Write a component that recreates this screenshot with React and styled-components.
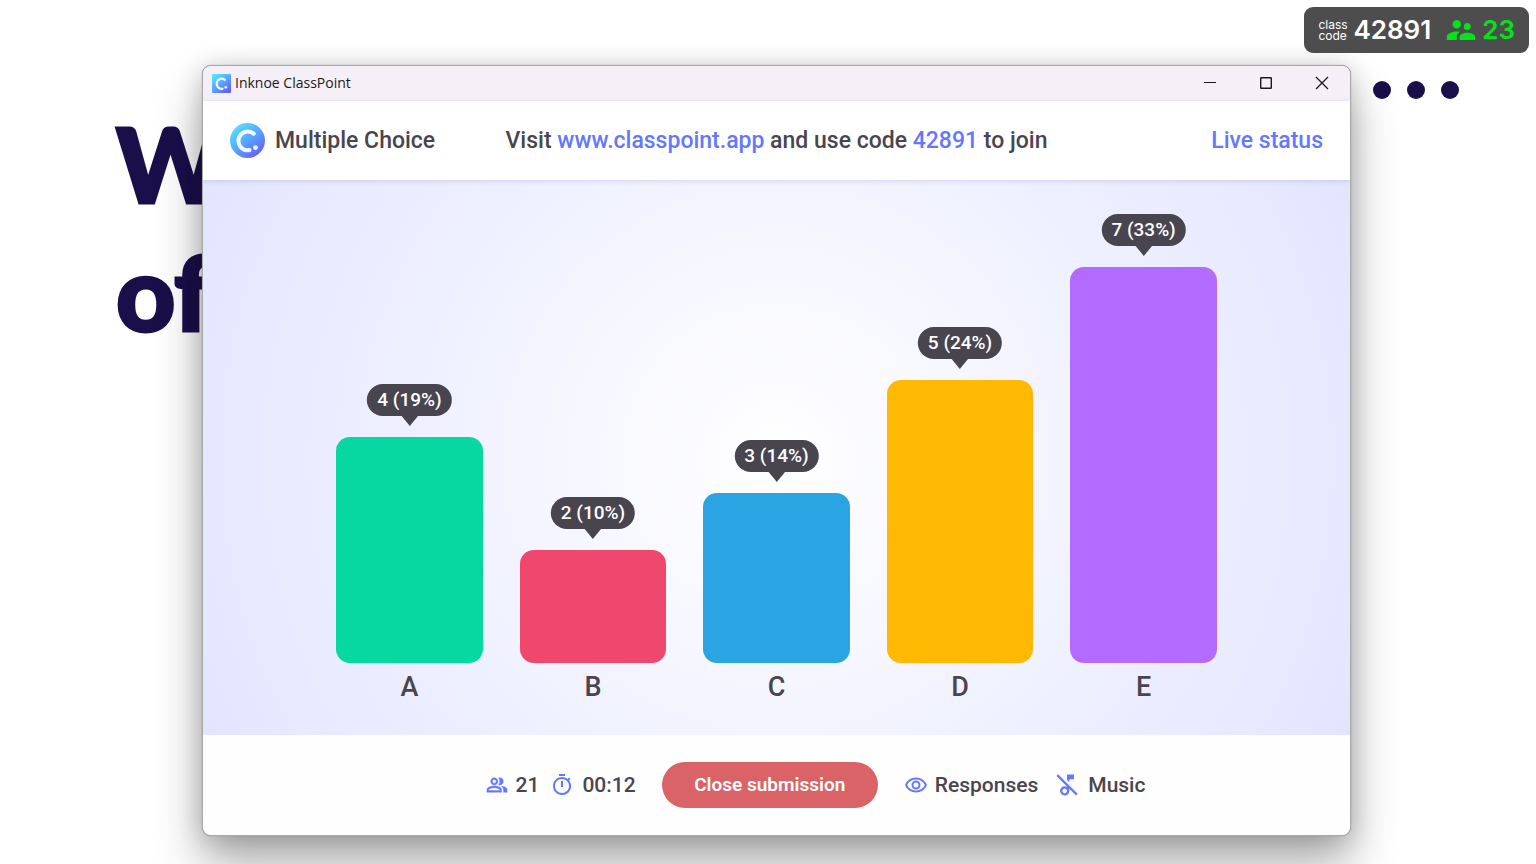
import React from "react";
import styled, { createGlobalStyle } from "styled-components";
import {
  MdSupervisorAccount,
  MdOutlineTimer,
  MdOutlineRemoveRedEye,
  MdOutlineMusicOff,
} from "react-icons/md";

const GlobalStyle = createGlobalStyle`
  *, *::before, *::after { box-sizing: border-box; }
  body { margin: 0; background: #fff; font-family: Roboto, "Liberation Sans", sans-serif; color: #49454f; }
  button { font: inherit; color: inherit; border: 0; padding: 0; background: none; cursor: pointer; }
  a { color: #6378ff; text-decoration: none; }
  svg { display: block; flex: none; }
`;

const Desktop = styled.main`
  position: relative;
  min-height: 100vh;
  overflow: hidden;
`;

const SlideTitle = styled.h1`
  margin: 0;
  padding: 99px 0 0 116px;
  font-family: Lato, Roboto, sans-serif;
  font-size: 103px;
  font-weight: 900;
  line-height: 128px;
  color: #1b0f4b;
  -webkit-text-stroke: 3px #1b0f4b;
`;

const ClassCode = styled.aside`
  position: absolute;
  top: 7px;
  right: 7px;
  display: flex;
  align-items: center;
  height: 46px;
  padding: 0 14px;
  border-radius: 9px;
  background: #4d4d4d;
  color: #fff;
  font-family: Inter, sans-serif;
`;

const CodeCaption = styled.span`
  width: 35px;
  font-size: 12px;
  line-height: 11px;
`;

const CodeValue = styled.strong`
  font-size: 26px;
  font-weight: 600;
  line-height: 32px;
`;

const Participants = styled.span`
  display: flex;
  align-items: center;
  gap: 4px;
  margin-left: 13px;
  color: #00e518;
`;

const Dots = styled.div`
  position: absolute;
  top: 81px;
  right: 77px;
  display: flex;
  gap: 16px;
`;

const Dot = styled.span`
  width: 18px;
  height: 18px;
  border-radius: 50%;
  background: #1b0f4b;
`;

const AppWindow = styled.section`
  position: absolute;
  inset: 65px 185px 28px 202px;
  display: flex;
  flex-direction: column;
  border: 1px solid #a9a9a9;
  border-radius: 9px;
  background: #fff;
  background-clip: padding-box;
  overflow: hidden;
  box-shadow: 0 0 1px #888, 0 28px 48px rgba(0, 0, 0, 0.32), 0 2px 24px rgba(0, 0, 0, 0.18);
`;

const TitleBar = styled.div`
  flex: none;
  display: flex;
  align-items: center;
  height: 35px;
  padding-left: 9px;
  background: #f5f0f8;
  color: #1a1a1a;
  font-family: "Open Sans", "Noto Sans", sans-serif;
  font-size: 14px;
  line-height: 20px;
`;

const AppName = styled.span`
  flex: 1;
  padding: 0 0 2px 4px;
`;

const WindowButton = styled.button`
  display: flex;
  align-items: center;
  align-self: flex-start;
  justify-content: center;
  width: 56px;
  height: 34px;
`;

const Header = styled.header`
  position: relative;
  flex: none;
  display: grid;
  grid-template-columns: 1fr auto 1fr;
  align-items: center;
  height: 79px;
  padding: 0 27px;
  background: #fff;
  box-shadow: 0 1px 5px rgba(70, 60, 130, 0.18);
  font-size: 23px;
  font-weight: 500;
  line-height: 32px;
`;

const Brand = styled.h2`
  display: flex;
  align-items: center;
  gap: 10px;
  margin: 0;
  font: inherit;
`;

const JoinText = styled.p`
  margin: 0;
`;

const LiveStatus = styled.a`
  justify-self: end;
`;

const Code = styled.span`
  color: #6378ff;
`;

const Chart = styled.div`
  flex: 1;
  display: flex;
  padding: 87px 10% 27px;
  background: radial-gradient(circle at center, #ffffff 0%, #e3e5ff 100%);
`;

const Column = styled.div`
  flex: 1;
  display: flex;
  flex-direction: column;
  align-items: center;
`;

const Plot = styled.div`
  flex: 1;
  display: flex;
  align-items: flex-end;
  justify-content: center;
  width: 100%;
`;

const Bar = styled.div`
  position: relative;
  width: 80%;
  border-radius: 14px;
  background: ${(p) => p.$color};
`;

const Callout = styled.span`
  position: absolute;
  bottom: 100%;
  left: 50%;
  transform: translateX(-50%);
  margin-bottom: 21px;
  padding: 0 10px;
  border-radius: 16px;
  background: #49454f;
  color: #fff;
  font-size: 19px;
  font-weight: 500;
  line-height: 32px;
  white-space: nowrap;

  &::after {
    content: "";
    position: absolute;
    top: 100%;
    left: 50%;
    margin: -1px 0 0 -9px;
    border: 9px solid transparent;
    border-top: 11px solid #49454f;
    border-bottom: 0;
  }
`;

const Option = styled.span`
  height: 45px;
  font-size: 27px;
  font-weight: 500;
  line-height: 48px;
`;

const Footer = styled.footer`
  flex: none;
  display: flex;
  align-items: center;
  justify-content: center;
  height: 100px;
  padding-left: 78px;
  background: #fefefe;
  font-size: 21px;
  font-weight: 500;
  line-height: 32px;
`;

const Stat = styled.span`
  display: flex;
  align-items: center;
  gap: 8px;
  margin-right: ${(p) => p.$after}px;

  svg { color: #6378ff; }
`;

const Toggle = styled.button`
  display: flex;
  align-items: center;
  gap: 7px;
  margin-left: ${(p) => p.$before}px;

  svg { color: #6378ff; }
`;

const CloseButton = styled.button`
  min-width: 216px;
  height: 46px;
  padding: 0 24px;
  border-radius: 23px;
  background: #d96367;
  color: #fff;
  font-size: 19px;
  font-weight: 600;
`;

function Logo({ size, radius, id }) {
  return (
    <svg width={size} height={size} viewBox="0 0 36 36" aria-hidden="true">
      <defs>
        <linearGradient id={id} x1="0.1" y1="0" x2="0.9" y2="1">
          <stop offset="0" stopColor="#52eaff" />
          <stop offset="0.5" stopColor="#58a5ff" />
          <stop offset="1" stopColor="#6a50ff" />
        </linearGradient>
      </defs>
      <rect width="36" height="36" rx={radius} fill={`url(#${id})`} />
      <path d="M24.4 11A9.6 9.6 0 1 0 20 27.9" fill="none" stroke="#f3f7ff" strokeWidth="4.2" strokeLinecap="round" />
      <circle cx="26.2" cy="25.3" r="2.5" fill="#f3f7ff" />
    </svg>
  );
}

function GroupIcon({ size }) {
  return (
    <svg width={size} height={size} viewBox="0 0 24 24" fill="currentColor" aria-hidden="true">
      <path d="M1 20v-2.8q0-.85.438-1.562T2.6 14.55q1.55-.775 3.15-1.162T9 13t3.25.388 3.15 1.162q.725.375 1.163 1.088T17 17.2V20zm18 0v-3q0-1.1-.612-2.113T16.65 13.15q1.275.15 2.4.513t2.1.887q.9.5 1.375 1.112T23 17v3zM9 12q-1.65 0-2.825-1.175T5 8t1.175-2.825T9 4t2.825 1.175T13 8t-1.175 2.825T9 12m10-4q0 1.65-1.175 2.825T15 12q-.275 0-.7-.062t-.7-.138q.675-.8 1.038-1.775T15 8t-.362-2.025T13.6 4.2q.35-.125.7-.162T15 4q1.65 0 2.825 1.175T19 8M3 18h12v-.8q0-.275-.137-.5t-.363-.35q-1.35-.675-2.725-1.012T9 15t-2.775.338T3.5 16.35q-.225.125-.363.35T3 17.2zm6-8q.825 0 1.413-.587T11 8t-.587-1.412T9 6t-1.412.588T7 8t.588 1.413T9 10" stroke="currentColor" strokeWidth="0.4" />
    </svg>
  );
}

const answers = [
  { option: "A", votes: 4, share: 19, color: "#07d8a2" },
  { option: "B", votes: 2, share: 10, color: "#f0476f" },
  { option: "C", votes: 3, share: 14, color: "#2ba4e3" },
  { option: "D", votes: 5, share: 24, color: "#ffb902" },
  { option: "E", votes: 7, share: 33, color: "#b36bff" },
];

const most = Math.max(...answers.map((a) => a.votes));

export default function App() {
  return (
    <Desktop>
      <GlobalStyle />
      <SlideTitle>
        W<br />of
      </SlideTitle>
      <Dots>
        <Dot />
        <Dot />
        <Dot />
      </Dots>

      <AppWindow>
        <TitleBar>
          <Logo size={19} radius={2} id="logo-small" />
          <AppName>Inknoe ClassPoint</AppName>
          <WindowButton aria-label="Minimize">
            <svg width="14" height="14" viewBox="0 0 14 14" stroke="#1a1a1a">
              <path d="M1 6.5H13" />
            </svg>
          </WindowButton>
          <WindowButton aria-label="Maximize">
            <svg width="14" height="14" viewBox="0 0 14 14" fill="none" stroke="#1a1a1a" strokeWidth="1.4">
              <rect x="1.7" y="1.7" width="10.6" height="10.6" rx="0.5" />
            </svg>
          </WindowButton>
          <WindowButton aria-label="Close">
            <svg width="14" height="14" viewBox="0 0 14 14" stroke="#1a1a1a" strokeWidth="1.3">
              <path d="M1 1L13 13M13 1L1 13" />
            </svg>
          </WindowButton>
        </TitleBar>

        <Header>
          <Brand>
            <Logo size={35} radius={18} id="logo-large" />
            Multiple Choice
          </Brand>
          <JoinText>
            Visit <a href="#join">www.classpoint.app</a> and use code <Code>42891</Code> to join
          </JoinText>
          <LiveStatus href="#status">Live status</LiveStatus>
        </Header>

        <Chart>
          {answers.map((a) => (
            <Column key={a.option}>
              <Plot>
                <Bar $color={a.color} style={{ height: `${(a.votes / most) * 100}%` }}>
                  <Callout>
                    {a.votes} ({a.share}%)
                  </Callout>
                </Bar>
              </Plot>
              <Option>{a.option}</Option>
            </Column>
          ))}
        </Chart>

        <Footer>
          <Stat $after={11}>
            <GroupIcon size={22} />
            21
          </Stat>
          <Stat $after={26}>
            <MdOutlineTimer size={24} />
            00:12
          </Stat>
          <CloseButton>Close submission</CloseButton>
          <Toggle $before={26}>
            <MdOutlineRemoveRedEye size={24} />
            Responses
          </Toggle>
          <Toggle $before={15}>
            <MdOutlineMusicOff size={28} />
            Music
          </Toggle>
        </Footer>
      </AppWindow>

      <ClassCode>
        <CodeCaption>
          class
          <br />
          code
        </CodeCaption>
        <CodeValue>42891</CodeValue>
        <Participants>
          <MdSupervisorAccount size={34} />
          <CodeValue>23</CodeValue>
        </Participants>
      </ClassCode>
    </Desktop>
  );
}
